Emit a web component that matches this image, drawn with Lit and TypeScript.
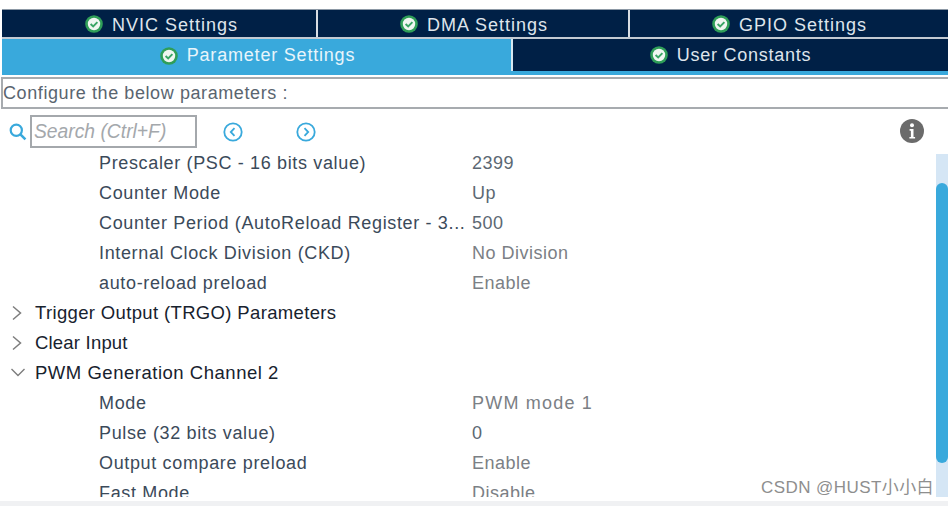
import { LitElement, html, css } from "lit";
import { customElement } from "lit/decorators.js";

const check = html`<svg class="chk" width="18" height="18" viewBox="0 0 18 18"><circle cx="9" cy="9" r="8.8" fill="#2f9e58"/><circle cx="9" cy="9" r="6.2" fill="#f0f6f1"/><path d="M5.6 9l2.6 2.5 4.2-4.3" fill="none" stroke="#3aa565" stroke-width="1.9"/></svg>`;
const tab = (t: string, cls = "") => html`<div class="tab ${cls}">${check}<span>${t}</span></div>`;
const chevR = html`<svg width="14" height="16" viewBox="0 0 14 16"><path d="M3 1.5l7.5 6.5L3 14.5" fill="none" stroke="#7d7d7d" stroke-width="1.5"/></svg>`;
const chevD = html`<svg width="16" height="14" viewBox="0 0 16 14"><path d="M1.5 4l6.5 6.5L14.5 4" fill="none" stroke="#7d7d7d" stroke-width="1.4"/></svg>`;
const nav = (d: string) => html`<svg width="20" height="20" viewBox="0 0 20 20"><circle cx="10" cy="10" r="8.7" fill="none" stroke="#39a9dc" stroke-width="1.8"/><path d="${d}" fill="none" stroke="#39a9dc" stroke-width="1.8"/></svg>`;

const rows1 = [
  ["Prescaler (PSC - 16 bits value)", "2399", "on"],
  ["Counter Mode", "Up", "on"],
  ["Counter Period (AutoReload Register - 3...", "500", "on"],
  ["Internal Clock Division (CKD)", "No Division", ""],
  ["auto-reload preload", "Enable", ""],
];
const rows2 = [
  ["Mode", "PWM mode 1", "wide"],
  ["Pulse (32 bits value)", "0", "on"],
  ["Output compare preload", "Enable", ""],
  ["Fast Mode", "Disable", ""],
];

@customElement("app-root")
export class AppRoot extends LitElement {
  static styles = css`
    :host { display: block; width: 948px; height: 506px; position: relative; overflow: hidden; background: #fff;
      font-family: "Liberation Sans", Arial, sans-serif; font-size: 18px; color: #3b4a5a; }
    .page { padding: 9px 0 0 2px; height: 497px; box-sizing: border-box; display: flex; flex-direction: column; }
    .tabs1 { display: flex; height: 30px; box-sizing: border-box; background: #002046; border-top: 1px solid #8c98a5; border-bottom: 2px solid #c3cad2; }
    .tab { display: flex; align-items: center; justify-content: center; gap: 9px; color: #dfe5ec; letter-spacing: 1px; font-size: 18px; box-sizing: border-box; }
    .tabs1 .tab { padding-top: 4px; }
    .tabs1 .tab .chk { margin-top: -4px; }
    .tabs1 .tab + .tab { border-left: 2px solid #d8dde3; }
    .t1 { width: 314px; padding-left: 5px; } .t2 { width: 312px; padding-left: 2px; } .t3 { flex: 1; padding-left: 1px; }
    .tabs2 { display: flex; height: 36px; background: #39a9dc; }
    .p { width: 509px; height: 33px; color: #e8f5fb; padding-left: 2px; letter-spacing: 0.8px; }
    .u { flex: 1; height: 32px; background: #002046; border-left: 2px solid #d8e8f0; letter-spacing: 0.75px; }
    .sep { height: 2px; margin-left: -2px; background: #fff; }
    .cfg { margin-left: -1px; height: 32px; box-sizing: border-box; border: 2px solid #a7abaf; border-right: 0; background: #fff;
      display: flex; align-items: center; color: #5a6570; letter-spacing: 0.59px; font-size: 18px; }
    .bar { display: flex; align-items: center; height: 45px; padding-left: 7px; }
    .mag { display: block; }
    .search { width: 167px; height: 33px; box-sizing: border-box; margin-left: 3px; border: 2px solid #a4a8ac; display: flex; align-items: center; padding-left: 2px;
      font-style: italic; color: #a4a8ac; font-size: 19.3px; }
    .navs { display: flex; gap: 53px; margin-left: 26px; }
    .navs svg { display: block; }
    .info { margin-left: auto; margin-right: 24px; margin-bottom: 2px; display: block; }
    .body { flex: 1; min-height: 0; display: flex; overflow: hidden; }
    .list { flex: 1; overflow: hidden; margin-top: -6px; }
    .row { height: 30px; display: flex; align-items: center; white-space: nowrap; letter-spacing: 0.65px; }
    .row.sub { padding-left: 97px; }
    .row.head { color: #17222e; padding-left: 33px; position: relative; font-size: 18.5px; letter-spacing: 0.35px; }
    .row.head.clear { letter-spacing: 0.2px; }
    .row.head.pwm { letter-spacing: 0.52px; }
    .row.head svg { position: absolute; left: 8px; top: 7px; }
    .name { width: 373px; }
    .val { color: #7b8085; letter-spacing: 0.5px; }
    .val.on { color: #5c6873; }
    .val.wide { letter-spacing: 1.2px; }
    .track { width: 12px; background: #d5e6f5; display: flex; flex-direction: column; padding-top: 29px; box-sizing: border-box; }
    .thumb { height: 280px; background: #39a9dc; border-radius: 6px; }
    .foot { position: absolute; left: 0; right: 0; bottom: 0; height: 5px; background: #f0f1f3; }
    .wm { position: absolute; right: 14px; top: 478px; font-size: 17px; color: #8e8e8e; letter-spacing: 0.42px; white-space: nowrap;
      font-family: "Liberation Sans", "Noto Sans CJK SC", sans-serif; line-height: 20px; }
  `;

  private row(r: string[]) {
    return html`<div class="row sub"><div class="name">${r[0]}</div><div class="val ${r[2]}">${r[1]}</div></div>`;
  }

  render() {
    return html`
      <div class="page">
        <div class="tabs1">
          ${tab("NVIC Settings", "t1")}${tab("DMA Settings", "t2")}${tab("GPIO Settings", "t3")}
        </div>
        <div class="tabs2">
          ${tab("Parameter Settings", "p")}${tab("User Constants", "u")}
        </div>
        <div class="sep"></div>
        <div class="cfg">Configure the below parameters :</div>
        <div class="bar">
          <svg class="mag" width="18" height="18" viewBox="0 0 18 18"><circle cx="7.3" cy="7.3" r="5.6" fill="none" stroke="#39a9dc" stroke-width="2.2"/><path d="M11.4 11.4l5 5" stroke="#39a9dc" stroke-width="2.6"/></svg>
          <div class="search">Search (Ctrl+F)</div>
          <div class="navs">${nav("M11.5 6.2L7.8 10l3.7 3.8")}${nav("M8.5 6.2l3.7 3.8-3.7 3.8")}</div>
          <svg class="info" width="24" height="24" viewBox="0 0 24 24"><circle cx="12" cy="12" r="12" fill="#6b6b6b"/><circle cx="12" cy="6.2" r="2" fill="#fff"/><path d="M9.6 10h3.9v8h1.6v1.6H9.4V18h1.5v-6.3H9.6z" fill="#fff"/></svg>
        </div>
        <div class="body">
          <div class="list">
            ${rows1.map((r) => this.row(r))}
            <div class="row head">${chevR}Trigger Output (TRGO) Parameters</div>
            <div class="row head clear">${chevR}Clear Input</div>
            <div class="row head pwm">${chevD}PWM Generation Channel 2</div>
            ${rows2.map((r) => this.row(r))}
          </div>
          <div class="track"><div class="thumb"></div></div>
        </div>
      </div>
      <div class="foot"></div>
      <div class="wm">CSDN @HUST小小白</div>
    `;
  }
}
